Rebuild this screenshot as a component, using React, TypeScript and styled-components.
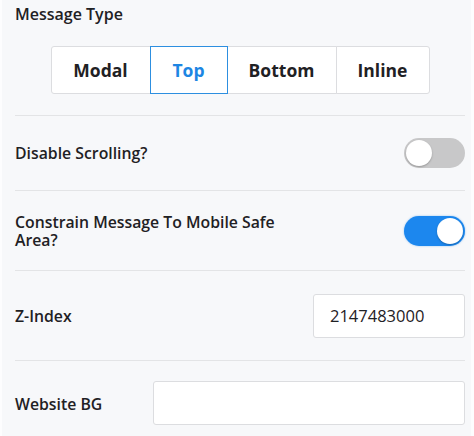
import { useState } from 'react';
import styled, { createGlobalStyle } from 'styled-components';

const GlobalStyle = createGlobalStyle`
    html, body {
        margin: 0;
        padding: 0;
        background: #fdfdfe;
    }
    body {
        font-family: "Open Sans", Arial, sans-serif;
        color: #1f2124;
    }
`;

const Panel = styled.div`
    box-sizing: border-box;
    width: 469px;
    height: 436px;
    margin-left: 2px;
    padding: 0 6px 0 13px;
    background: #f7f8fa;
    overflow: hidden;
`;

const Section = styled.div`
    border-bottom: 1px solid #e3e4e6;
    padding: 3px 0 21px;
`;

const Title = styled.div`
    font-size: 16px;
    font-weight: 600;
    line-height: 23px;
`;

const Segments = styled.div`
    display: flex;
    justify-content: center;
    margin-top: 20px;
`;

const Segment = styled.button<{ $active?: boolean; $w: number }>`
    width: ${p => p.$w}px;
    height: 48px;
    margin-left: -1px;
    background: #fff;
    border: 1px solid ${p => (p.$active ? '#2d8fe0' : '#dcdde0')};
    position: relative;
    z-index: ${p => (p.$active ? 1 : 0)};
    font-family: "Open Sans", Arial, sans-serif;
    font-size: 17.5px;
    font-weight: 700;
    color: ${p => (p.$active ? '#1d86e3' : '#1f2124')};
    cursor: pointer;
    &:first-child {
        border-radius: 3px 0 0 3px;
        margin-left: 0;
    }
    &:last-child {
        border-radius: 0 3px 3px 0;
    }
`;

const Row = styled.div<{ $h: number }>`
    height: ${p => p.$h}px;
    display: flex;
    align-items: center;
    justify-content: space-between;
    border-bottom: 1px solid #e3e4e6;
    &:last-child {
        border-bottom: 0;
        align-items: flex-start;
        padding-top: 20px;
    }
`;

const Label = styled.div`
    font-size: 15.8px;
    font-weight: 600;
    line-height: 18px;
    max-width: 285px;
`;

const LastLabel = styled(Label)`
    padding-top: 14px;
`;

const Track = styled.button<{ $on: boolean }>`
    width: 61px;
    height: 30px;
    border-radius: 15px;
    border: 0;
    padding: 2px;
    display: flex;
    justify-content: ${p => (p.$on ? 'flex-end' : 'flex-start')};
    background: ${p => (p.$on ? '#1c87ee' : '#c8c8c9')};
    box-shadow: ${p => (p.$on ? '0 0 2px rgba(28,135,238,0.5)' : 'none')};
    cursor: pointer;
`;

const Knob = styled.span`
    width: 26px;
    height: 26px;
    border-radius: 50%;
    background: #fff;
    box-shadow: 0 1px 2px rgba(0, 0, 0, 0.25);
`;

const TextInput = styled.input<{ $w: number }>`
    width: ${p => p.$w}px;
    height: 44px;
    box-sizing: border-box;
    border: 1px solid #dcdde0;
    border-radius: 3px;
    background: #fff;
    padding: 0 16px;
    font-family: "Open Sans", Arial, sans-serif;
    font-size: 16.5px;
    color: #1f2124;
    outline: none;
`;

function Toggle(props: { on: boolean; onChange: (v: boolean) => void }) {
    return (
        <Track $on={props.on} onClick={() => props.onChange(!props.on)}>
            <Knob />
        </Track>
    );
}

const types = [
    { name: 'Modal', w: 100 },
    { name: 'Top', w: 78 },
    { name: 'Bottom', w: 110 },
    { name: 'Inline', w: 94 },
];

export default function App() {
    const [type, setType] = useState('Top');
    const [noScroll, setNoScroll] = useState(false);
    const [safeArea, setSafeArea] = useState(true);
    const [zIndex, setZIndex] = useState('2147483000');
    const [bg, setBg] = useState('');

    return (
        <>
            <GlobalStyle />
            <Panel>
                <Section>
                    <Title>Message Type</Title>
                    <Segments>
                        {types.map(t => (
                            <Segment key={t.name} $w={t.w} $active={type === t.name}
                                    onClick={() => setType(t.name)}>
                                {t.name}
                            </Segment>
                        ))}
                    </Segments>
                </Section>
                <Row $h={74}>
                    <Label>Disable Scrolling?</Label>
                    <Toggle on={noScroll} onChange={setNoScroll} />
                </Row>
                <Row $h={79}>
                    <Label>Constrain Message To Mobile Safe Area?</Label>
                    <Toggle on={safeArea} onChange={setSafeArea} />
                </Row>
                <Row $h={89}>
                    <Label>Z-Index</Label>
                    <TextInput $w={152} value={zIndex} onChange={e => setZIndex(e.target.value)} />
                </Row>
                <Row $h={74}>
                    <LastLabel>Website BG</LastLabel>
                    <TextInput $w={312} value={bg} onChange={e => setBg(e.target.value)} />
                </Row>
            </Panel>
        </>
    );
}
